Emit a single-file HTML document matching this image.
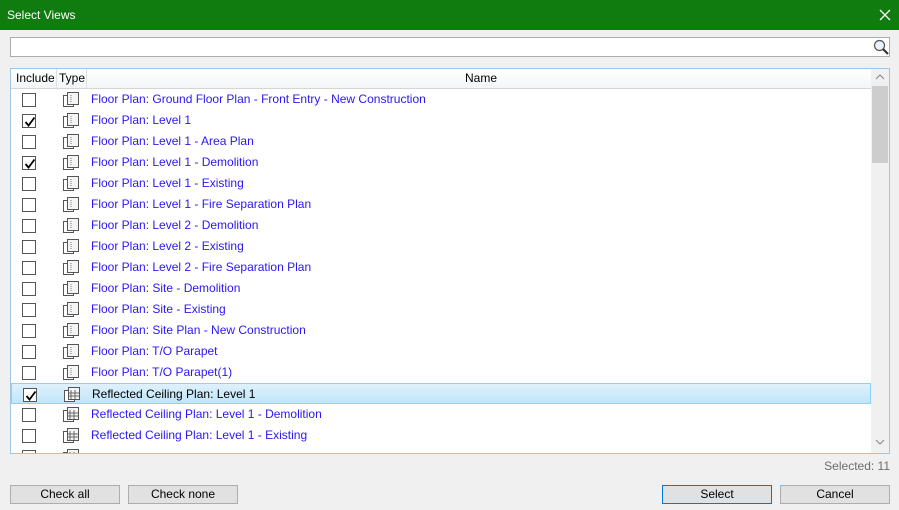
<!DOCTYPE html><html><head><style>
*{box-sizing:border-box}body{margin:0;width:899px;height:510px;background:#f0f0f0;font-family:"Liberation Sans",sans-serif;font-size:12px;position:relative;overflow:hidden}
.title{position:absolute;left:0;top:0;width:899px;height:30px;background:#107c10;color:#fff;font-size:12px;line-height:30px;padding-left:7px}
.x{position:absolute;right:8px;top:9px}
.search{position:absolute;left:10px;top:37px;width:880px;height:20px;background:#fff;border:1px solid #acacac}
.list{position:absolute;left:10px;top:68px;width:880px;height:386px;background:#fff;border:1px solid #9fc5e8;overflow:hidden}
.hdr{position:absolute;left:0;top:0;width:860px;height:20px;background:linear-gradient(#fff,#f3f5f7);border-bottom:1px solid #d5d5d5;font-size:12px;line-height:19px;color:#000}
.hdr span{position:absolute;top:0}
.row{position:absolute;left:0;width:860px;height:21px;line-height:21px}
.cb{position:absolute;left:11px;top:4px;width:14px;height:14px;border:1px solid #555;background:#fff}
.cb svg{position:absolute;left:1px;top:1px}
.ic{position:absolute;left:52px;top:3px}
.t{position:absolute;left:80px;top:0;color:#2a16f5;white-space:nowrap}
.sel{background:linear-gradient(#dff1fc,#bfe6fa);border:1px solid #8fd0f5}
.sel .t{color:#000}
.sb{position:absolute;left:860px;top:0;width:18px;height:384px;background:#f0f0f0}
.thumb{position:absolute;left:1px;top:17px;width:16px;height:77px;background:#cdcdcd}
.btn{position:absolute;top:485px;height:19px;width:110px;background:#e1e1e1;border:1px solid #adadad;text-align:center;line-height:17px;font-size:12px}
</style></head><body>
<div class="title">Select Views<svg class="x" width="12" height="12"><path d="M1 1L11 11M11 1L1 11" stroke="#fff" stroke-width="1.3"/></svg></div>
<div class="search"><svg style="position:absolute;right:0;top:1px" width="16" height="16"><circle cx="6.5" cy="6.5" r="5" fill="#e8f4f8" stroke="#555" stroke-width="1.2"/><line x1="10" y1="10" x2="15" y2="15" stroke="#333" stroke-width="2.2"/></svg></div>
<div class="list">
<div class="hdr"><span style="left:5px">Include</span><span style="left:45px;border-left:1px solid #e0e0e0;padding-left:2px">Type</span><span style="left:75px;border-left:1px solid #e0e0e0;height:20px;width:0"></span><span style="left:454px">Name</span></div>
<div id="rows"></div>
<div class="sb"><svg style="position:absolute;left:4px;top:5px" width="10" height="6"><path d="M1 5L5 1L9 5" stroke="#888" fill="none"/></svg><div class="thumb"></div><svg style="position:absolute;left:4px;top:370px" width="10" height="6"><path d="M1 1L5 5L9 1" stroke="#888" fill="none"/></svg></div>
</div>
<div style="position:absolute;right:9px;top:459px;color:#6d6d6d">Selected: 11</div>
<div class="btn" style="left:10px">Check all</div>
<div class="btn" style="left:128px">Check none</div>
<div class="btn" style="left:662px;border-color:#0078d7">Select</div>
<div class="btn" style="left:780px">Cancel</div>
<script>
var r=[["Floor Plan: Ground Floor Plan - Front Entry - New Construction",0],["Floor Plan: Level 1",1],["Floor Plan: Level 1 - Area Plan",0],["Floor Plan: Level 1 - Demolition",1],["Floor Plan: Level 1 - Existing",0],["Floor Plan: Level 1 - Fire Separation Plan",0],["Floor Plan: Level 2 - Demolition",0],["Floor Plan: Level 2 - Existing",0],["Floor Plan: Level 2 - Fire Separation Plan",0],["Floor Plan: Site - Demolition",0],["Floor Plan: Site - Existing",0],["Floor Plan: Site Plan - New Construction",0],["Floor Plan: T/O Parapet",0],["Floor Plan: T/O Parapet(1)",0],["Reflected Ceiling Plan: Level 1",1,1],["Reflected Ceiling Plan: Level 1 - Demolition",0],["Reflected Ceiling Plan: Level 1 - Existing",0],["",0]];
var fp='<svg width="16" height="15"><rect x="0.5" y="3.5" width="10" height="11" fill="#fff" stroke="#555"/><rect x="4.5" y="0.5" width="11" height="12" fill="#f4f4f4" stroke="#555"/><line x1="8" y1="3" x2="8" y2="10" stroke="#777" stroke-dasharray="1,1"/></svg>';
var rc='<svg width="16" height="15"><rect x="0.5" y="3.5" width="10" height="11" fill="#fff" stroke="#555"/><rect x="4.5" y="0.5" width="11" height="12" fill="#f4f4f4" stroke="#555"/><path d="M7 3v9M11 3v9M5 6h10M5 9h10" stroke="#666"/></svg>';
var ck='<svg width="12" height="12"><path d="M1.5 6L4.5 9.5L10.5 1.5" stroke="#000" stroke-width="1.8" fill="none"/></svg>';
var h='';r.forEach(function(x,i){var y=20+i*21;h+='<div class="row'+(x[2]?' sel':'')+'" style="top:'+y+'px"><div class="cb">'+(x[1]?ck:'')+'</div><div class="ic">'+(x[0].indexOf('Reflected')==0||x[0]==''?rc:fp)+'</div><div class="t">'+x[0]+'</div></div>';});
document.getElementById('rows').innerHTML=h;
</script>
</body></html>
